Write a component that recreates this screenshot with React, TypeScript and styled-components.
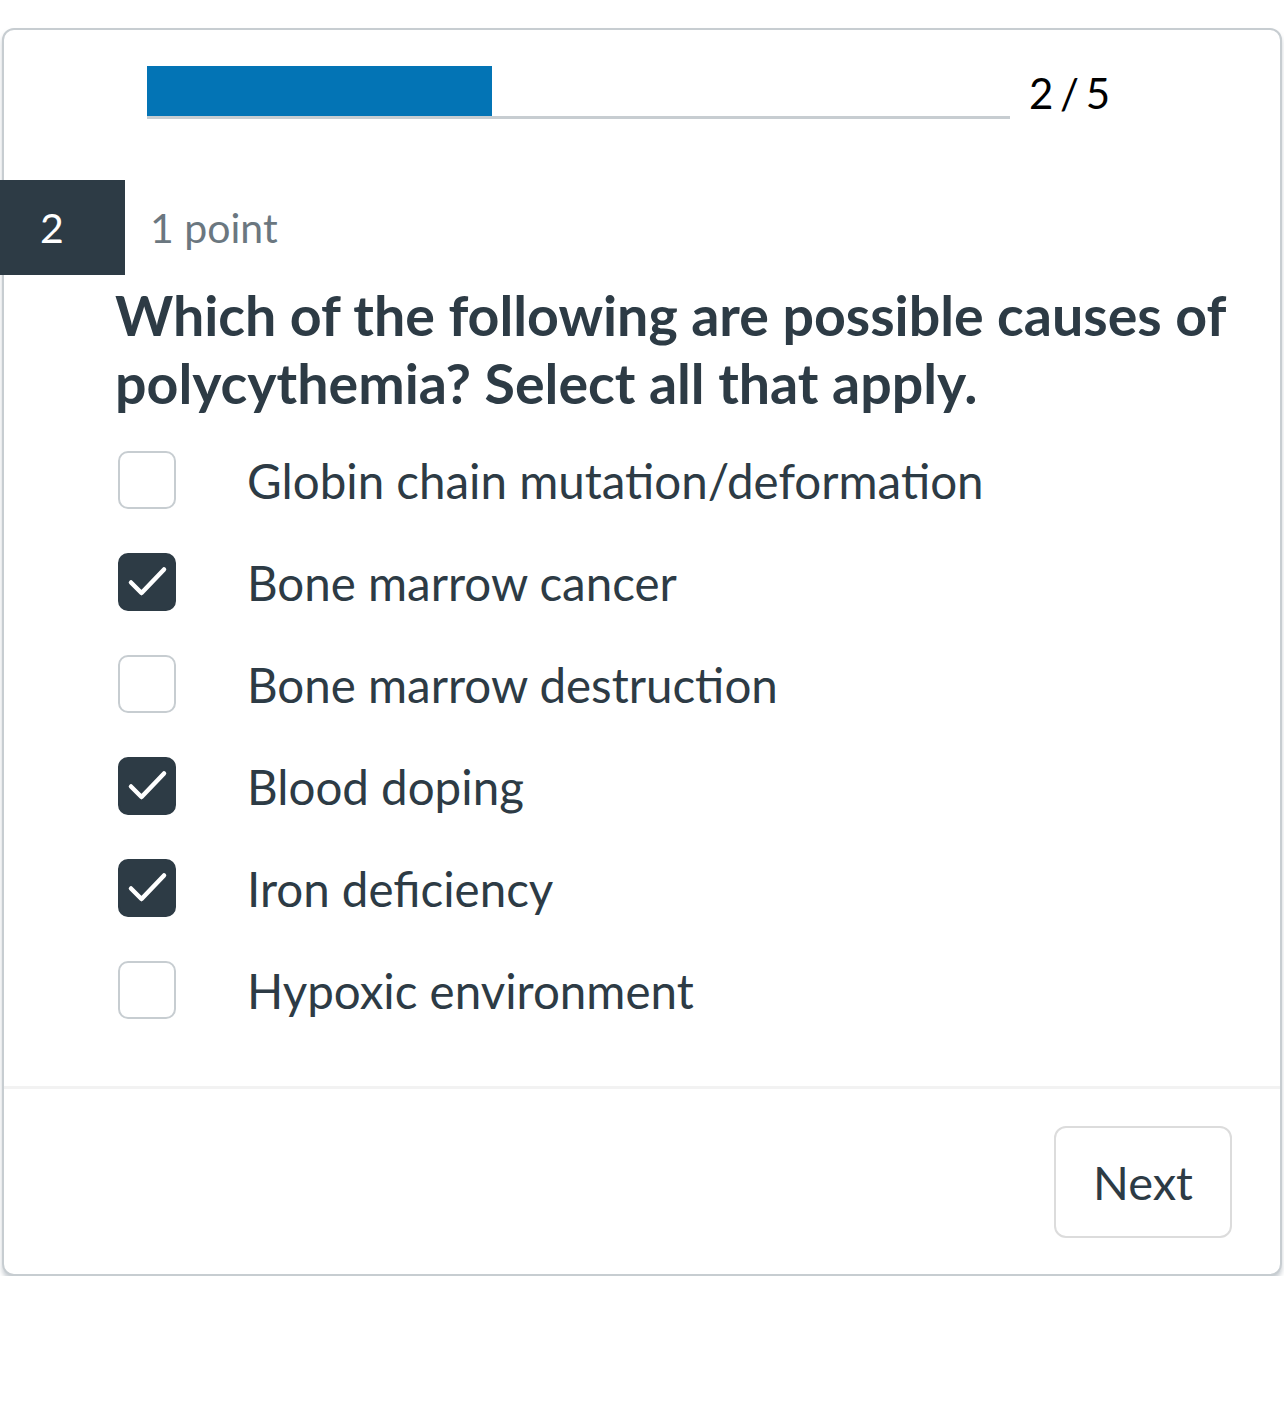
import React from "react"
import styled, { createGlobalStyle } from "styled-components"

const GlobalStyle = createGlobalStyle`
  body {
    margin: 0;
    background: #ffffff;
    font-family: Lato, "Noto Sans", sans-serif;
    color: #2d3b45;
  }
`

const Page = styled.div`
  padding: 28px 2px 0 2px;
`

const Card = styled.div`
  border: 2px solid #c7cdd1;
  border-radius: 12px;
  box-shadow: 0 4px 4px rgba(150, 160, 170, 0.5);
  background: #ffffff;
`

const ProgressRow = styled.div`
  display: flex;
  align-items: center;
  gap: 19px;
  padding: 36px 0 0 143px;
`

const Track = styled.div`
  width: 863px;
  height: 53px;
  display: flex;
  align-items: flex-start;
  border-bottom: 3px solid #c7cdd1;
  box-sizing: border-box;
`

const Fill = styled.div`
  height: 50px;
  background: #0374b5;
`

const Counter = styled.div`
  font-size: 42px;
  color: #000000;
  word-spacing: -4px;
`

const NumberRow = styled.div`
  display: flex;
  align-items: center;
  gap: 25px;
  margin: 61px 0 0 -4px;
`

const NumberBox = styled.div`
  width: 125px;
  height: 95px;
  box-sizing: border-box;
  padding-left: 40px;
  background: #2d3b45;
  color: #ffffff;
  font-size: 41px;
  display: flex;
  align-items: center;
`

const Points = styled.div`
  font-size: 41px;
  color: #6b7780;
`

const Question = styled.h2`
  margin: 6px 30px 0 111px;
  font-size: 55.5px;
  line-height: 68px;
  font-weight: 700;
  color: #2d3b45;
`

const Options = styled.div`
  display: flex;
  flex-direction: column;
  gap: 44px;
  margin: 34px 0 0 114px;
`

const Option = styled.label`
  display: flex;
  align-items: center;
  gap: 71px;
  font-size: 47.5px;
  color: #2d3b45;
`

const Box = styled.span<{ $checked: boolean }>`
  width: 58px;
  height: 58px;
  flex: none;
  box-sizing: border-box;
  border-radius: 10px;
  display: flex;
  background: ${(p) => (p.$checked ? "#2d3b45" : "#ffffff")};
  border: 2px solid ${(p) => (p.$checked ? "#2d3b45" : "#c7cdd1")};
`

const Divider = styled.div`
  margin-top: 67px;
  border-top: 3px solid #f2f2f2;
`

const Footer = styled.div`
  display: flex;
  justify-content: flex-end;
  padding: 37px 48px 36px 0;
`

const NextButton = styled.button`
  width: 178px;
  height: 112px;
  border: 2px solid #dcdcdc;
  border-radius: 12px;
  background: #ffffff;
  font-family: Lato, "Noto Sans", sans-serif;
  font-size: 47px;
  color: #2d3b45;
  padding: 0;
`

const options = [
  { text: "Globin chain mutation/deformation", checked: false },
  { text: "Bone marrow cancer", checked: true },
  { text: "Bone marrow destruction", checked: false },
  { text: "Blood doping", checked: true },
  { text: "Iron deficiency", checked: true },
  { text: "Hypoxic environment", checked: false },
]

const Check = () => (
  <svg width="54" height="54" viewBox="0 0 54 54" fill="none">
    <path d="M11 27.5 L21.5 38 L44 14.5" stroke="#ffffff" strokeWidth="4.5" strokeLinecap="round" strokeLinejoin="round" />
  </svg>
)

export default function App() {
  return (
    <Page>
      <GlobalStyle />
      <Card>
        <ProgressRow>
          <Track>
            <Fill style={{ width: `${(2 / 5) * 100}%` }} />
          </Track>
          <Counter>2 / 5</Counter>
        </ProgressRow>
        <NumberRow>
          <NumberBox>2</NumberBox>
          <Points>1 point</Points>
        </NumberRow>
        <Question>Which of the following are possible causes of polycythemia? Select all that apply.</Question>
        <Options>
          {options.map((o) => (
            <Option key={o.text}>
              <Box $checked={o.checked}>{o.checked && <Check />}</Box>
              {o.text}
            </Option>
          ))}
        </Options>
        <Divider />
        <Footer>
          <NextButton>Next</NextButton>
        </Footer>
      </Card>
    </Page>
  )
}
